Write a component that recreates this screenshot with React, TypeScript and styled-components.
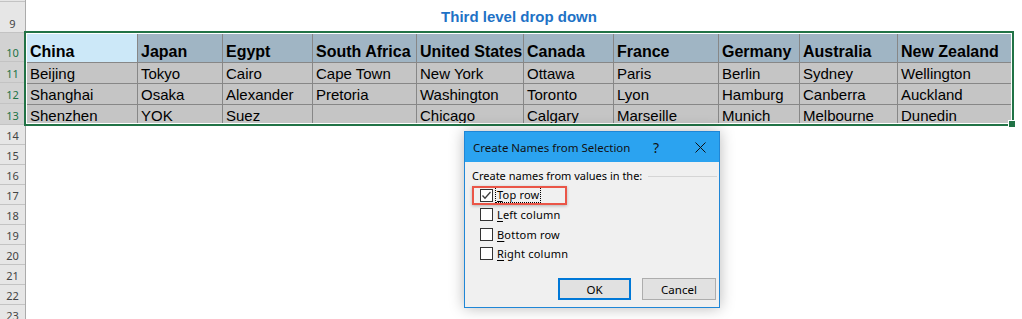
import styled, { createGlobalStyle } from "styled-components";

const GlobalStyle = createGlobalStyle`
  html, body {
    margin: 0;
    padding: 0;
    background: #ffffff;
  }
  body {
    width: 1022px;
    height: 319px;
    overflow: hidden;
    font-family: "Liberation Sans", Arial, sans-serif;
  }
`;

const Sheet = styled.div`
  position: relative;
  display: flex;
  width: 1022px;
  height: 319px;
  overflow: hidden;
  background: #ffffff;
`;

const RowHeaders = styled.div`
  display: flex;
  flex-direction: column;
  width: 25px;
  flex: none;
  border-right: 1px solid #ababab;
  background: #e6e6e6;
`;

const RowHead = styled.div<{ $h: number; $selected?: boolean }>`
  box-sizing: border-box;
  height: ${(p) => p.$h}px;
  flex: none;
  display: flex;
  align-items: flex-end;
  justify-content: center;
  border-bottom: 1px solid #c3c3c3;
  background: ${(p) => (p.$selected ? "#d2d2d2" : "#e6e6e6")};
  color: ${(p) => (p.$selected ? "#217346" : "#444444")};
  font-family: "Noto Sans", "Open Sans", sans-serif;
  font-size: 11px;
  line-height: 15px;
  padding-bottom: 1px;
  overflow: hidden;
`;

const Main = styled.div`
  display: flex;
  flex-direction: column;
  margin-left: -2px;
`;

const TitleRow = styled.div`
  width: 990px;
  height: 31px;
  box-sizing: border-box;
  padding-top: 8px;
  text-align: center;
  font-size: 15px;
  line-height: 17px;
  font-weight: bold;
  color: #1e72c6;
`;

const Table = styled.div`
  position: relative;
  width: 990px;
  box-sizing: border-box;
  border: 2px solid #217346;
  padding: 1px;
  background: #ffffff;
`;

const Handle = styled.div`
  position: absolute;
  right: -4px;
  bottom: -4px;
  width: 6px;
  height: 6px;
  background: #217346;
  border: 1px solid #ffffff;
`;

const Grid = styled.div`
  display: grid;
  grid-template-columns: 110px 84px 89px 103px 106px 89px 104px 80px 97px 113px;
  grid-template-rows: 28px 20px 20px 18px;
  gap: 1px;
  background: #878787;
`;

const Cell = styled.div<{ $kind: "head" | "active" | "data" }>`
  overflow: hidden;
  white-space: nowrap;
  padding-left: 3px;
  padding-top: ${(p) => (p.$kind === "data" ? 2 : 9)}px;
  font-size: ${(p) => (p.$kind === "data" ? 15 : 16)}px;
  font-weight: ${(p) => (p.$kind === "data" ? "normal" : "bold")};
  color: #000000;
  background: ${(p) =>
    p.$kind === "active" ? "#cce8f8" : p.$kind === "head" ? "#a0b5c4" : "#c5c5c5"};
`;

const Dialog = styled.div`
  position: absolute;
  left: 464px;
  top: 131px;
  width: 256px;
  height: 177px;
  box-sizing: border-box;
  border: 1px solid #1f86d6;
  background: #f0f0f0;
  box-shadow: 0 0 14px rgba(0, 0, 0, 0.28);
  display: flex;
  flex-direction: column;
  font-family: "Noto Sans", "Open Sans", sans-serif;
  font-size: 11px;
  color: #000000;
`;

const TitleBar = styled.div`
  height: 30px;
  flex: none;
  display: flex;
  align-items: center;
  padding-left: 8px;
  background: #2ba3f0;
  color: #111111;
`;

const TitleText = styled.div`
  flex: 1;
  font-size: 11.5px;
`;

const TitleButton = styled.div<{ $w: number }>`
  width: ${(p) => p.$w}px;
  height: 30px;
  display: flex;
  align-items: center;
  justify-content: center;
  font-size: 14px;
  color: #111111;
`;

const Body = styled.div`
  position: relative;
  flex: 1;
  display: flex;
  flex-direction: column;
  padding: 6px 2px 7px 7px;
`;

const GroupLabel = styled.div`
  display: flex;
  align-items: center;
  line-height: 15px;
`;

const GroupLine = styled.div`
  flex: 1;
  height: 1px;
  margin-left: 6px;
  margin-top: 1px;
  background: #d5d5d5;
`;

const Options = styled.div`
  display: flex;
  flex-direction: column;
  padding-left: 8px;
  margin-top: 6px;
`;

const Option = styled.div`
  height: 19.4px;
  display: flex;
  align-items: flex-start;
`;

const Box = styled.div`
  width: 13px;
  height: 13px;
  box-sizing: border-box;
  border: 1px solid #333333;
  background: #ffffff;
  flex: none;
  display: flex;
  align-items: center;
  justify-content: center;
`;

const OptionText = styled.span<{ $focused?: boolean }>`
  margin-left: ${(p) => (p.$focused ? 2 : 4)}px;
  margin-top: ${(p) => (p.$focused ? -2 : -1)}px;
  padding: ${(p) => (p.$focused ? "0 1px" : "0")};
  line-height: ${(p) => (p.$focused ? "14px" : "16px")};
  border: ${(p) => (p.$focused ? "1px dotted #000000" : "none")};
  letter-spacing: 0.2px;
  u {
    text-decoration: underline;
    text-underline-offset: 2px;
  }
`;

const Highlight = styled.div`
  position: absolute;
  left: 7px;
  top: 24px;
  width: 95px;
  height: 19px;
  box-sizing: border-box;
  border: 2px solid #ea5547;
  box-shadow: 0 1px 3px rgba(0, 0, 0, 0.25);
  pointer-events: none;
`;

const Buttons = styled.div`
  margin-top: auto;
  display: flex;
  justify-content: flex-end;
  gap: 11px;
  padding-right: 1px;
`;

const Button = styled.button<{ $primary?: boolean }>`
  width: ${(p) => (p.$primary ? 73 : 74)}px;
  height: 22px;
  box-sizing: border-box;
  padding: 0;
  background: #e1e1e1;
  border: ${(p) => (p.$primary ? "2px solid #0078d7" : "1px solid #adadad")};
  font-family: "Noto Sans", "Open Sans", sans-serif;
  font-size: 11.5px;
  color: #000000;
`;

const headers = [
  "China",
  "Japan",
  "Egypt",
  "South Africa",
  "United States",
  "Canada",
  "France",
  "Germany",
  "Australia",
  "New Zealand",
];

const rows = [
  ["Beijing", "Tokyo", "Cairo", "Cape Town", "New York", "Ottawa", "Paris", "Berlin", "Sydney", "Wellington"],
  ["Shanghai", "Osaka", "Alexander", "Pretoria", "Washington", "Toronto", "Lyon", "Hamburg", "Canberra", "Auckland"],
  ["Shenzhen", "YOK", "Suez", "", "Chicago", "Calgary", "Marseille", "Munich", "Melbourne", "Dunedin"],
];

// row heights include the 1px divider at the bottom of each header
const rowHeads: { label: string; h: number; selected?: boolean }[] = [
  { label: "", h: 2 },
  { label: "9", h: 31 },
  { label: "10", h: 29, selected: true },
  { label: "11", h: 21, selected: true },
  { label: "12", h: 21, selected: true },
  { label: "13", h: 21, selected: true },
  ...Array.from({ length: 10 }, (_, i) => ({ label: String(14 + i), h: 20 })),
];

const options = [
  { key: "T", rest: "op row", checked: true },
  { key: "L", rest: "eft column" },
  { key: "B", rest: "ottom row" },
  { key: "R", rest: "ight column" },
];

const App = () => {
  return (
    <>
      <GlobalStyle />
      <Sheet>
        <RowHeaders>
          {rowHeads.map((r, i) => (
            <RowHead key={i} $h={r.h} $selected={r.selected}>
              {r.label}
            </RowHead>
          ))}
        </RowHeaders>
        <Main>
          <TitleRow>Third level drop down</TitleRow>
          <Table>
            <Grid>
              {headers.map((h, i) => (
                <Cell key={h} $kind={i === 0 ? "active" : "head"}>
                  {h}
                </Cell>
              ))}
              {rows.map((row, r) =>
                row.map((v, c) => (
                  <Cell key={`${r}-${c}`} $kind="data">
                    {v}
                  </Cell>
                ))
              )}
            </Grid>
            <Handle />
          </Table>
        </Main>

        <Dialog>
          <TitleBar>
            <TitleText>Create Names from Selection</TitleText>
            <TitleButton $w={50}>?</TitleButton>
            <TitleButton $w={38}>
              <svg width="11" height="11" viewBox="0 0 11 11">
                <path d="M0.5 0.5 L10.5 10.5 M10.5 0.5 L0.5 10.5" stroke="#111" strokeWidth="1" fill="none" />
              </svg>
            </TitleButton>
          </TitleBar>
          <Body>
            <GroupLabel>
              Create names from values in the:
              <GroupLine />
            </GroupLabel>
            <Options>
              {options.map((o) => (
                <Option key={o.key}>
                  <Box>
                    {o.checked && (
                      <svg width="11" height="11" viewBox="0 0 11 11">
                        <polyline points="1.5,5.5 4,8.2 9.5,2" stroke="#3c3c3c" strokeWidth="1.3" fill="none" />
                      </svg>
                    )}
                  </Box>
                  <OptionText $focused={o.checked}>
                    <u>{o.key}</u>
                    {o.rest}
                  </OptionText>
                </Option>
              ))}
            </Options>
            <Highlight />
            <Buttons>
              <Button $primary>OK</Button>
              <Button>Cancel</Button>
            </Buttons>
          </Body>
        </Dialog>
      </Sheet>
    </>
  );
};

export default App;
